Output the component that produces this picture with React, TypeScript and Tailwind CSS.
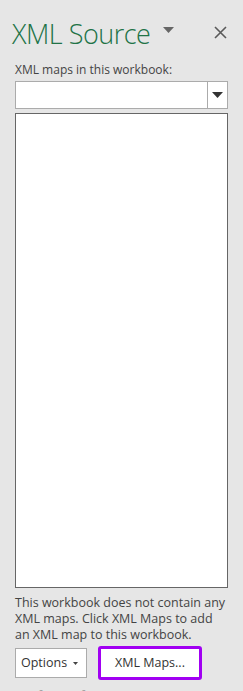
import React from 'react';

const font = { fontFamily: '"Open Sans", "Noto Sans", sans-serif' };

export default function App() {
  return (
    <div className="w-[243px] h-[691px] overflow-hidden bg-[#e6e6e6] text-[#444]" style={font}>
      {/* Header */}
      <div className="flex items-center h-[34px] mt-[16px] pl-[12px] pr-[16px]">
        <span className="text-[27px] font-light text-[#217346] leading-none tracking-[-0.5px]">XML Source</span>
        <svg width="11" height="6" viewBox="0 0 11 6" className="ml-[13px] mb-[6px]">
          <path d="M0 0 H11 L5.5 6 Z" fill="#666" />
        </svg>
        <svg width="13" height="13" viewBox="0 0 13 13" className="ml-auto mb-[2px]">
          <path d="M1 1 L12 12 M12 1 L1 12" stroke="#5a5a5a" strokeWidth="1.6" />
        </svg>
      </div>

      <div className="px-[15px]">
        <div className="mt-[12px] text-[12px] leading-[16px] text-[#444]">XML maps in this workbook:</div>

        {/* Combobox */}
        <div className="mt-[3px] flex h-[28px] border border-[#ababab] bg-white">
          <div className="flex-1" />
          <div className="w-[20px] border-l border-[#ababab] flex items-center justify-center">
            <svg width="11" height="6" viewBox="0 0 11 6">
              <path d="M0 0 H11 L5.5 6 Z" fill="#333" />
            </svg>
          </div>
        </div>

        {/* List */}
        <div className="mt-[4px] h-[475px] border border-[#666] bg-white" />

        <p className="mt-[7px] text-[12.5px] leading-[16px] text-[#444]">
          This workbook does not contain any XML maps. Click XML Maps to add an XML map to this workbook.
        </p>

        <div className="mt-[3px] flex items-center">
          <button className="h-[30px] w-[72px] border border-[#ababab] bg-white flex items-center pl-[5px] text-[12.5px] text-[#333]">
            Options
            <svg width="5" height="3" viewBox="0 0 5 3" className="ml-[6px]">
              <path d="M0 0 H5 L2.5 3 Z" fill="#444" />
            </svg>
          </button>
          <button className="ml-[11px] h-[34px] w-[104px] rounded-[3px] border-[3px] border-[#a100f2] bg-white flex items-center justify-center text-[12.5px] text-[#333]">
            XML Maps...
          </button>
        </div>

        <div className="mt-[6px] text-[12.5px] text-[#a0a0a0] leading-[19px]">Verify Map for Export...</div>
      </div>
    </div>
  );
}
